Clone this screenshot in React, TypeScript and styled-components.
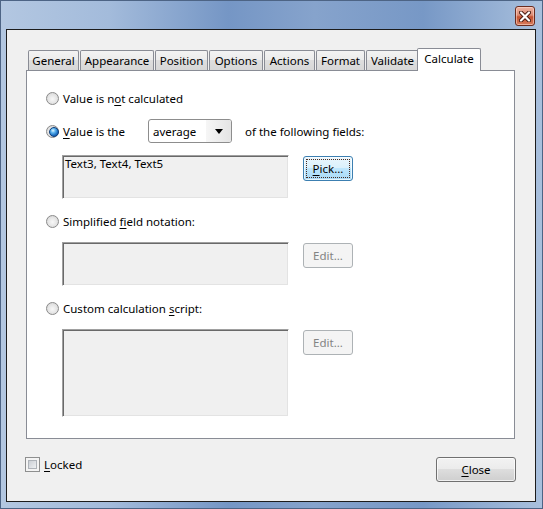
import React from 'react'
import styled, { createGlobalStyle } from 'styled-components'

const GlobalStyle = createGlobalStyle`
  * { box-sizing: border-box; }
  html, body { margin: 0; padding: 0; background: #7c9bc8; }
  body {
    font-family: 'Noto Sans', 'Open Sans', sans-serif;
    font-size: 11.5px;
    color: #000;
  }
`

const TABS = [
  { label: 'General', width: 51 },
  { label: 'Appearance', width: 74 },
  { label: 'Position', width: 53 },
  { label: 'Options', width: 54 },
  { label: 'Actions', width: 51 },
  { label: 'Format', width: 49 },
  { label: 'Validate', width: 53 },
  { label: 'Calculate', width: 64, active: true },
]

/* window chrome */

const Window = styled.div`
  width: 543px;
  height: 509px;
  display: flex;
  flex-direction: column;
  border: 1px solid #4d6485;
  padding: 0 6px 6px 5px;
  background: linear-gradient(
    90deg,
    #b3c7e1 0%,
    #a3bbdb 20%,
    #7596c5 42%,
    #86a3cc 58%,
    #7798c6 78%,
    #a9c0dd 100%
  );
`

const TitleBar = styled.div`
  height: 28px;
  flex-shrink: 0;
  display: flex;
  justify-content: flex-end;
  align-items: flex-start;
  padding: 5px 1px 0 0;
`

const CloseX = styled.div`
  width: 20px;
  height: 20px;
  display: flex;
  align-items: center;
  justify-content: center;
  border: 1px solid #6b2c1f;
  border-radius: 3px;
  background: linear-gradient(#eeb3a2 0%, #dc8d76 45%, #c4502f 55%, #d77e5f 100%);
  box-shadow: inset 0 0 0 1px rgba(255, 220, 210, 0.55);
`

const Client = styled.div`
  flex: 1;
  display: flex;
  flex-direction: column;
  background: #f0f0f0;
  border: 1px solid #1c1c1c;
  padding: 18px 20px 0 19px;
`

/* tabs */

const TabStrip = styled.div`
  height: 22px;
  display: flex;
  align-items: flex-end;
  padding-left: 2px;
`

const Tab = styled.div<{ $width: number; $active?: boolean }>`
  width: ${({ $width }) => $width}px;
  min-width: 0;
  flex-shrink: 0;
  height: ${({ $active }) => ($active ? 23 : 20)}px;
  margin-left: ${({ $active }) => ($active ? -2 : 1)}px;
  margin-bottom: ${({ $active }) => ($active ? -1 : 0)}px;
  position: relative;
  z-index: ${({ $active }) => ($active ? 1 : 0)};
  display: flex;
  justify-content: center;
  align-items: ${({ $active }) => ($active ? 'flex-start' : 'center')};
  padding-top: ${({ $active }) => ($active ? 2 : 0)}px;
  border: 1px solid #898c95;
  border-bottom: none;
  border-radius: 2px 2px 0 0;
  background: ${({ $active }) =>
    $active ? '#fff' : 'linear-gradient(#f3f3f3 0%, #ebebeb 50%, #dedede 50%, #d7d7d7 100%)'};
  white-space: nowrap;

  &:first-child {
    margin-left: 0;
  }
`

const Panel = styled.div`
  height: 369px;
  border: 1px solid #898c95;
  background: #fff;
  padding: 15px 0 0 19px;
  display: flex;
  flex-direction: column;
`

/* controls */

const OptionRow = styled.div<{ $gap?: number }>`
  height: 24px;
  margin-top: ${({ $gap }) => $gap ?? 0}px;
  display: flex;
  align-items: center;
`

const Radio = styled.span<{ $checked?: boolean }>`
  width: 13px;
  height: 13px;
  flex-shrink: 0;
  border-radius: 50%;
  border: 1px solid #8a8a8a;
  background: radial-gradient(circle at 50% 55%, #f8f8f8 0%, #e4e4e4 55%, #cdcdcd 100%);
  position: relative;

  &::after {
    content: '';
    display: ${({ $checked }) => ($checked ? 'block' : 'none')};
    position: absolute;
    left: 1.5px;
    top: 1.5px;
    width: 8px;
    height: 8px;
    border-radius: 50%;
    border: 1px solid #0f3f7a;
    background: radial-gradient(circle at 38% 32%, #e2f6ff 0%, #5fb6f0 30%, #1d6fc2 65%, #0b4a92 100%);
  }
`

const Label = styled.span<{ $width?: number }>`
  margin-left: 4px;
  white-space: nowrap;
  ${({ $width }) => ($width ? `width: ${$width}px;` : '')}
`

const Key = styled.span`
  text-decoration: underline;
  text-underline-offset: 2px;
`

const Select = styled.div`
  width: 84px;
  height: 24px;
  display: flex;
  align-items: center;
  border: 1px solid #8d8d8d;
  border-radius: 3px;
  background: #fff;
  overflow: hidden;
`

const SelectValue = styled.span`
  flex: 1;
  padding-left: 4px;
`

const SelectButton = styled.span`
  width: 25px;
  height: 100%;
  display: flex;
  align-items: center;
  justify-content: center;
  background: linear-gradient(90deg, #f6f6f6 0%, #e4e4e4 100%);

  &::before {
    content: '';
    border-left: 4px solid transparent;
    border-right: 4px solid transparent;
    border-top: 5px solid #000;
  }
`

const Trailing = styled.span`
  margin-left: 13px;
  white-space: nowrap;
`

const FieldRow = styled.div<{ $gap: number }>`
  margin-top: ${({ $gap }) => $gap}px;
  padding-left: 16px;
  display: flex;
  align-items: flex-start;
`

const FieldBox = styled.div<{ $height: number }>`
  width: 227px;
  height: ${({ $height }) => $height}px;
  padding: 0 2px;
  line-height: 16px;
  background: #f0f0f0;
  border: 1px solid;
  border-color: #a0a0a0 #ffffff #ffffff #a0a0a0;
  box-shadow: inset 1px 1px 0 #696969, inset -1px -1px 0 #e3e3e3;
`

const Button = styled.div<{ $variant?: 'default' | 'disabled' | 'normal' }>`
  width: 50px;
  height: 25px;
  margin: 1px 0 0 14px;
  display: flex;
  align-items: center;
  justify-content: center;
  border-radius: 3px;
  position: relative;
  border: 1px solid
    ${({ $variant }) =>
      $variant === 'default' ? '#3c7fb1' : $variant === 'disabled' ? '#adb2b5' : '#707070'};
  color: ${({ $variant }) => ($variant === 'disabled' ? '#838383' : '#000')};
  background: ${({ $variant }) =>
    $variant === 'default'
      ? 'linear-gradient(#eaf6fd 0%, #d9f0fc 50%, #bee6fd 50%, #a7d9f5 100%)'
      : $variant === 'disabled'
      ? '#f4f4f4'
      : 'linear-gradient(#f2f2f2 0%, #ebebeb 50%, #dddddd 50%, #cfcfcf 100%)'};
  box-shadow: inset 0 0 0 1px
    ${({ $variant }) => ($variant === 'disabled' ? '#f4f4f4' : 'rgba(255,255,255,0.7)')};

  ${({ $variant }) =>
    $variant === 'default'
      ? `&::after {
          content: '';
          position: absolute;
          inset: 2px;
          border: 1px dotted #4a2a20;
        }`
      : ''}
`

const Footer = styled.div`
  margin-top: 18px;
  display: flex;
  justify-content: space-between;
  align-items: flex-start;
`

const CheckRow = styled.div`
  display: flex;
  align-items: center;
  margin-left: -1px;
`

const CheckBox = styled.span`
  width: 15px;
  height: 15px;
  border: 1px solid #8e8f8f;
  background: #f4f4f4;
  box-shadow: inset 0 0 0 2px #f4f4f4, inset 0 0 0 3px #aeb3b9;
  position: relative;

  &::after {
    content: '';
    position: absolute;
    inset: 3px;
    background: linear-gradient(135deg, #cbcfd5 0%, #eef0f2 100%);
  }
`

const DialogButton = styled(Button)`
  width: 80px;
  margin: 0 -1px 0 0;
`

const CloseGlyph = () => (
  <svg width="12" height="11" viewBox="0 0 12 11">
    <path d="M2 1.5 L10 9.5 M10 1.5 L2 9.5" stroke="#4a1a10" strokeWidth="4" strokeLinecap="round" />
    <path d="M2 1.5 L10 9.5 M10 1.5 L2 9.5" stroke="#fff" strokeWidth="2.2" strokeLinecap="round" />
  </svg>
)

const App: React.FC = () => (
  <>
    <GlobalStyle />
    <Window>
      <TitleBar>
        <CloseX>
          <CloseGlyph />
        </CloseX>
      </TitleBar>
      <Client>
        <TabStrip>
          {TABS.map((t) => (
            <Tab key={t.label} $width={t.width} $active={t.active}>
              {t.label}
            </Tab>
          ))}
        </TabStrip>
        <Panel>
          <OptionRow>
            <Radio />
            <Label>
              Value is n<Key>o</Key>t calculated
            </Label>
          </OptionRow>
          <OptionRow $gap={9}>
            <Radio $checked />
            <Label $width={85}>
              <Key>V</Key>alue is the
            </Label>
            <Select>
              <SelectValue>average</SelectValue>
              <SelectButton />
            </Select>
            <Trailing>of the following fields:</Trailing>
          </OptionRow>
          <FieldRow $gap={12}>
            <FieldBox $height={44}>Text3, Text4, Text5</FieldBox>
            <Button $variant="default">
              <span>
                <Key>P</Key>ick...
              </span>
            </Button>
          </FieldRow>
          <OptionRow $gap={10}>
            <Radio />
            <Label>
              Simplified <Key>f</Key>ield notation:
            </Label>
          </OptionRow>
          <FieldRow $gap={9}>
            <FieldBox $height={44} />
            <Button $variant="disabled">Edit...</Button>
          </FieldRow>
          <OptionRow $gap={10}>
            <Radio />
            <Label>
              Custom calculation <Key>s</Key>cript:
            </Label>
          </OptionRow>
          <FieldRow $gap={9}>
            <FieldBox $height={88} />
            <Button $variant="disabled">Edit...</Button>
          </FieldRow>
        </Panel>
        <Footer>
          <CheckRow>
            <CheckBox />
            <Label>
              <Key>L</Key>ocked
            </Label>
          </CheckRow>
          <DialogButton $variant="normal">
            <span>
              <Key>C</Key>lose
            </span>
          </DialogButton>
        </Footer>
      </Client>
    </Window>
  </>
)

export default App
